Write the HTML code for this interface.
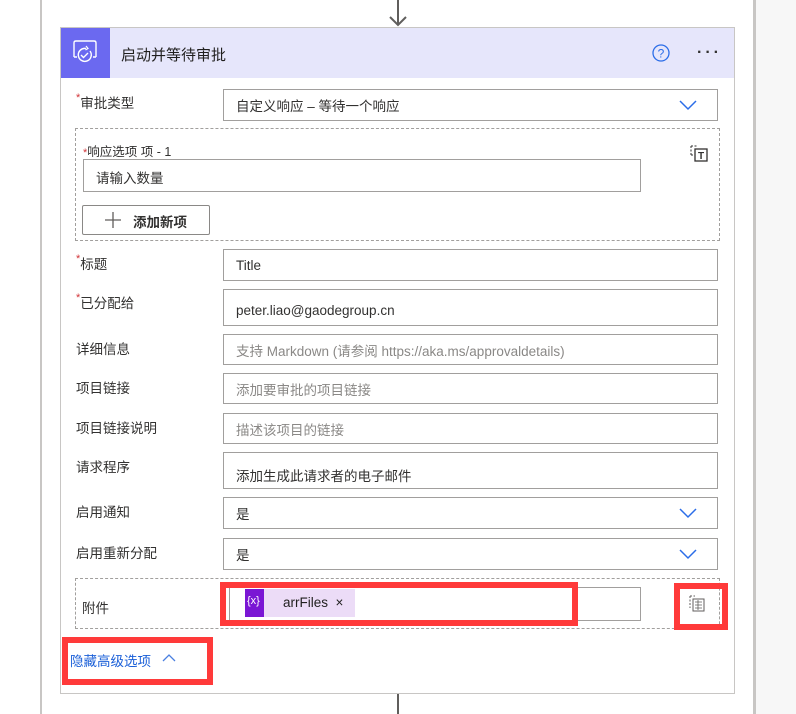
<!DOCTYPE html>
<html><head><meta charset="utf-8"><style>
*{box-sizing:border-box;margin:0;padding:0}
body{width:796px;height:714px;background:#fff;position:relative;overflow:hidden;font-family:"Liberation Sans","Noto Sans CJK SC",sans-serif;font-size:13.5px;color:#323130}
.a{position:absolute}
.lbl{position:absolute;left:76px;font-size:13.5px;color:#323130}
.lbl b{color:#d13438;font-weight:normal;font-size:11px;vertical-align:top}
.in{position:absolute;left:223px;width:495px;border:1px solid #a19f9d;background:#fff;padding-left:12px;font-size:13.5px;display:flex;align-items:center}
.ph{color:#8a8886}
.chev{position:absolute;right:20px;top:50%;margin-top:-6px}
.red{position:absolute;border:6px solid #ff3a3a}
</style></head><body>
<div class="a" style="left:40px;top:0;width:2px;height:714px;background:#c8c6c4"></div>
<div class="a" style="left:753px;top:0;width:3px;height:714px;background:#c8c6c4"></div>
<div class="a" style="left:756px;top:0;width:40px;height:714px;background:#f7f7f7"></div>
<svg class="a" style="left:386px;top:0" width="24" height="28"><path d="M12 0V25M4 17L12 25L20 17" stroke="#605e5c" stroke-width="2" fill="none"/></svg>
<div class="a" style="left:397px;top:693px;width:2px;height:21px;background:#605e5c"></div>
<div class="a" style="left:60px;top:27px;width:675px;height:667px;border:1px solid #c8c6c4"></div>
<div class="a" style="left:61px;top:28px;width:673px;height:50px;background:#e6e6fb"></div>
<div class="a" style="left:61px;top:28px;width:49px;height:50px;background:#6b69f0"></div>
<svg class="a" style="left:68px;top:38px" width="36" height="30" viewBox="0 0 36 30"><path d="M6 19V5Q6 3 8 3H26Q28 3 28 5V19M6 19H9M28 19H25" stroke="#fff" stroke-width="1.4" fill="none"/><path d="M22 13A6.5 6.5 0 1 1 18 10.5" stroke="#fff" stroke-width="1.4" fill="none"/><path d="M18 8L20 10.5L17.5 12" stroke="#fff" stroke-width="1.2" fill="none"/><path d="M13 17L15.5 19.5L20 15" stroke="#fff" stroke-width="1.4" fill="none"/></svg>
<div class="a" style="left:121px;top:44px;font-size:15px;color:#201f1e">启动并等待审批</div>
<svg class="a" style="left:651px;top:43px" width="20" height="20"><circle cx="10" cy="10" r="8" stroke="#2b6de8" stroke-width="1.3" fill="none"/><text x="10" y="14.5" font-size="12" text-anchor="middle" fill="#2b6de8" font-family="Liberation Sans">?</text></svg>
<div class="a" style="left:697px;top:44px;font-size:16px;letter-spacing:3px;color:#323130;font-weight:bold">···</div>

<div class="lbl" style="top:92px"><b>*</b>审批类型</div>
<div class="in" style="top:89px;height:32px">自定义响应 – 等待一个响应<svg class="chev" width="18" height="12"><path d="M1 2L9 10L17 2" stroke="#2b6de8" stroke-width="1.5" fill="none"/></svg></div>

<div class="a" style="left:75px;top:128px;width:645px;height:113px;border:1px dashed #a19f9d"></div>
<div class="a" style="left:83px;top:141px;font-size:12.5px"><b style="color:#d13438;font-weight:normal;font-size:11px">*</b>响应选项 项 - 1</div>
<div class="a" style="left:83px;top:159px;width:558px;height:33px;border:1px solid #a19f9d;padding:7px 12px;font-size:13.5px">请输入数量</div>
<div class="a" style="left:82px;top:205px;width:128px;height:30px;border:1px solid #8a8886;border-radius:2px;font-weight:bold;font-size:13.5px;padding:5px 0 0 50px">添加新项</div>
<svg class="a" style="left:103px;top:210px" width="20" height="20"><path d="M10 2V18M2 10H18" stroke="#605e5c" stroke-width="1.3"/></svg>
<svg class="a" style="left:689px;top:143px" width="22" height="22"><path d="M2 3H8M2 3V12M2 12H5" stroke="#323130" stroke-dasharray="2 1.5" fill="none"/><rect x="6" y="6" width="12" height="12" stroke="#323130" stroke-width="1.3" fill="#fff"/><text x="12" y="16" font-size="10" font-weight="bold" text-anchor="middle" fill="#323130" font-family="Liberation Sans">T</text></svg>

<div class="lbl" style="top:253px"><b>*</b>标题</div>
<div class="in" style="top:249px;height:32px">Title</div>
<div class="lbl" style="top:292px"><b>*</b>已分配给</div>
<div class="in" style="top:289px;height:37px;padding-top:6px">peter.liao@gaodegroup.cn</div>
<div class="lbl" style="top:338px">详细信息</div>
<div class="in ph" style="top:334px;height:31px">支持 Markdown (请参阅 https://aka.ms/approvaldetails)</div>
<div class="lbl" style="top:377px">项目链接</div>
<div class="in ph" style="top:373px;height:31px">添加要审批的项目链接</div>
<div class="lbl" style="top:417px">项目链接说明</div>
<div class="in ph" style="top:413px;height:31px">描述该项目的链接</div>
<div class="lbl" style="top:456px">请求程序</div>
<div class="in" style="top:452px;height:37px;padding-top:8px">添加生成此请求者的电子邮件</div>
<div class="lbl" style="top:501px">启用通知</div>
<div class="in" style="top:497px;height:32px">是<svg class="chev" width="18" height="12"><path d="M1 2L9 10L17 2" stroke="#2b6de8" stroke-width="1.5" fill="none"/></svg></div>
<div class="lbl" style="top:542px">启用重新分配</div>
<div class="in" style="top:538px;height:32px">是<svg class="chev" width="18" height="12"><path d="M1 2L9 10L17 2" stroke="#2b6de8" stroke-width="1.5" fill="none"/></svg></div>

<div class="a" style="left:75px;top:578px;width:645px;height:51px;border:1px dashed #a19f9d"></div>
<div class="a" style="left:82px;top:597px">附件</div>
<div class="a" style="left:229px;top:587px;width:412px;height:34px;border:1px solid #a19f9d"></div>
<div class="a" style="left:245px;top:589px;width:110px;height:28px;background:#ecdcf7"></div>
<div class="a" style="left:245px;top:589px;width:19px;height:28px;background:#7a16d4;color:#fff;font-size:11px;padding:6px 0 0 2px">{x}</div>
<div class="a" style="left:283px;top:595px;font-size:13.5px;color:#201f1e">arrFiles&nbsp;&nbsp;×</div>
<svg class="a" style="left:688px;top:594px" width="20" height="20"><path d="M2 2H7M2 2V14" stroke="#605e5c" stroke-dasharray="2 1.5" fill="none"/><rect x="5" y="5" width="11" height="12" stroke="#605e5c" fill="#fff"/><path d="M7 8H14M7 11H14M7 14H14M10 6V16" stroke="#605e5c" stroke-width=".8"/></svg>

<div class="red" style="left:220px;top:582px;width:358px;height:44px"></div>
<div class="red" style="left:674px;top:583px;width:54px;height:47px"></div>
<div class="red" style="left:62px;top:637px;width:151px;height:48px"></div>
<div class="a" style="left:70px;top:650px;color:#1a5fd8;font-size:13.5px">隐藏高级选项</div>
<svg class="a" style="left:161px;top:652px" width="16" height="12"><path d="M2 9L8 3L14 9" stroke="#4a7fe0" stroke-width="1.3" fill="none"/></svg>
</body></html>
